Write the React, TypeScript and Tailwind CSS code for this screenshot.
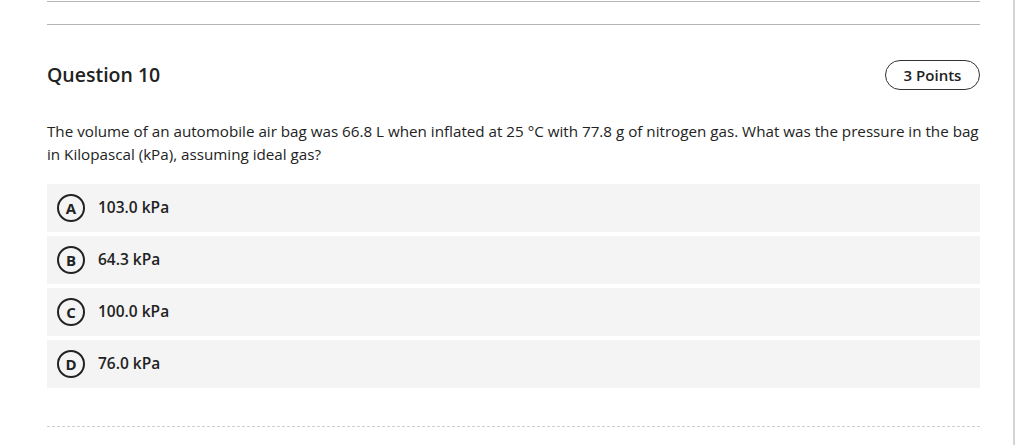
const options = [
  { letter: 'A', label: '103.0 kPa' },
  { letter: 'B', label: '64.3 kPa' },
  { letter: 'C', label: '100.0 kPa' },
  { letter: 'D', label: '76.0 kPa' },
]

export default function App() {
  return (
    <div className="flex h-[445px] w-[1024px] overflow-hidden bg-white font-['Open_Sans',sans-serif] text-[#222]">
      <div className="w-[1013px] pl-[47px] pr-[33px]">
        <div className="mt-[1px] h-px bg-[#b5b5b5]" />
        <div className="mt-[22px] h-px bg-[#b5b5b5]" />

        <header className="mt-[35px] flex h-[30px] items-center justify-between">
          <h2 className="text-[19.5px] font-semibold leading-none text-[#222]">Question 10</h2>
          <span className="flex h-[30px] w-[95px] items-center justify-center rounded-full border border-[#333] text-[15px] font-semibold">
            3 Points
          </span>
        </header>

        <p className="mt-[30px] text-[15.2px] leading-[23px] text-[#222]">
          The volume of an automobile air bag was 66.8 L when inflated at 25 °C with 77.8 g of nitrogen gas. What was the pressure in the bag in Kilopascal (kPa), assuming ideal gas?
        </p>

        <div className="mt-[18px] flex flex-col gap-[4px]">
          {options.map(option => (
            <div
              className="flex h-[48px] items-center gap-[13px] bg-[#f4f4f4] pl-[10px]"
              key={option.letter}
            >
              <span className="flex h-[28px] w-[28px] items-center justify-center rounded-full border-2 border-[#222] text-[15px] font-bold leading-none">
                {option.letter}
              </span>
              <span className="text-[15.5px] font-semibold">{option.label}</span>
            </div>
          ))}
        </div>

        <div className="mt-[38px] border-t border-dashed border-[#cfcfcf]" />
      </div>
      <div className="w-[2px] bg-[#d4d4d4]" />
    </div>
  )
}
